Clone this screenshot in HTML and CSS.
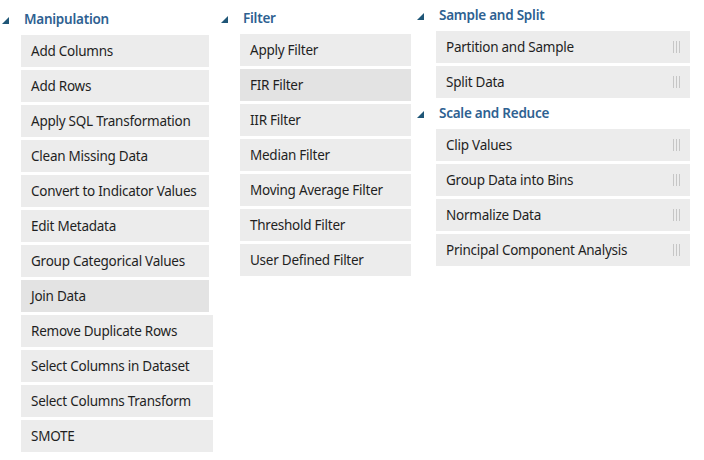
FILE: index.html
```html
<!DOCTYPE html>
<html>
<head>
<meta charset="utf-8">
<link rel="stylesheet" href="styles.css">
</head>
<body>
<div class="palette">
  <div class="col col-manip">
    <section class="group">
      <div class="group-head"><span class="caret"></span><span class="group-title">Manipulation</span></div>
      <ul class="items">
        <li class="item">Add Columns</li>
        <li class="item">Add Rows</li>
        <li class="item">Apply SQL Transformation</li>
        <li class="item">Clean Missing Data</li>
        <li class="item">Convert to Indicator Values</li>
        <li class="item">Edit Metadata</li>
        <li class="item">Group Categorical Values</li>
        <li class="item item-hover">Join Data</li>
        <li class="item item-wide">Remove Duplicate Rows</li>
        <li class="item item-wide">Select Columns in Dataset</li>
        <li class="item item-wide">Select Columns Transform</li>
        <li class="item item-wide">SMOTE</li>
      </ul>
    </section>
  </div>
  <div class="col col-filter">
    <section class="group">
      <div class="group-head"><span class="caret"></span><span class="group-title">Filter</span></div>
      <ul class="items">
        <li class="item">Apply Filter</li>
        <li class="item item-hover">FIR Filter</li>
        <li class="item">IIR Filter</li>
        <li class="item">Median Filter</li>
        <li class="item">Moving Average Filter</li>
        <li class="item">Threshold Filter</li>
        <li class="item">User Defined Filter</li>
      </ul>
    </section>
  </div>
  <div class="col col-sample">
    <section class="group">
      <div class="group-head"><span class="caret"></span><span class="group-title">Sample and Split</span></div>
      <ul class="items">
        <li class="item item-grip">Partition and Sample<span class="grip"></span></li>
        <li class="item item-grip">Split Data<span class="grip"></span></li>
      </ul>
    </section>
    <section class="group">
      <div class="group-head"><span class="caret"></span><span class="group-title">Scale and Reduce</span></div>
      <ul class="items">
        <li class="item item-grip">Clip Values<span class="grip"></span></li>
        <li class="item item-grip">Group Data into Bins<span class="grip"></span></li>
        <li class="item item-grip">Normalize Data<span class="grip"></span></li>
        <li class="item item-grip">Principal Component Analysis<span class="grip"></span></li>
      </ul>
    </section>
  </div>
</div>
</body>
</html>
```

FILE: styles.css
```css
html, body {
  margin: 0;
  padding: 0;
  background: #ffffff;
}
body {
  width: 704px;
  height: 460px;
  overflow: hidden;
  font-family: "Noto Sans", "Open Sans", sans-serif;
  font-size: 13.5px;
  letter-spacing: -0.25px;
  color: #1f1f1f;
}
.palette {
  display: grid;
  grid-template-columns: 219px 196px 1fr;
  padding-left: 2px;
  align-items: start;
}
.col-manip { padding-top: 4px; }
.col-filter { padding-top: 3px; }
.col-sample { padding-top: 0; width: 273px; }

.group {
  display: flex;
  flex-direction: column;
  gap: 3px;
}

.group-head {
  height: 28px;
  display: flex;
  align-items: center;
}
.caret {
  width: 0;
  height: 0;
  border-left: 7px solid transparent;
  border-bottom: 7px solid #1f5677;
  margin-top: 4px;
  flex: none;
}
.group-title {
  margin-left: 15px;
  font-weight: 600;
  color: #2e6191;
  line-height: 20px;
  padding-top: 2px;
}

.items {
  list-style: none;
  margin: 0;
  padding: 0 0 0 19px;
  display: flex;
  flex-direction: column;
  gap: 3px;
}
.item {
  height: 32px;
  line-height: 32px;
  padding-left: 10px;
  background: #ececec;
  width: 188px;
  box-sizing: border-box;
  white-space: nowrap;
}
.item-wide { width: 192px; }
.item-hover { background: #e3e3e3; }
.col-filter .item { width: 171px; }
.col-sample .item { width: 254px; }

.item-grip {
  display: flex;
  align-items: center;
  justify-content: space-between;
  padding-right: 10px;
}
.grip {
  width: 5px;
  height: 12px;
  border-left: 1px solid #c6c6c6;
  border-right: 1px solid #c6c6c6;
  position: relative;
  flex: none;
}
.grip::after {
  content: "";
  position: absolute;
  left: 2px;
  top: 0;
  width: 1px;
  height: 12px;
  background: #c6c6c6;
}
```
